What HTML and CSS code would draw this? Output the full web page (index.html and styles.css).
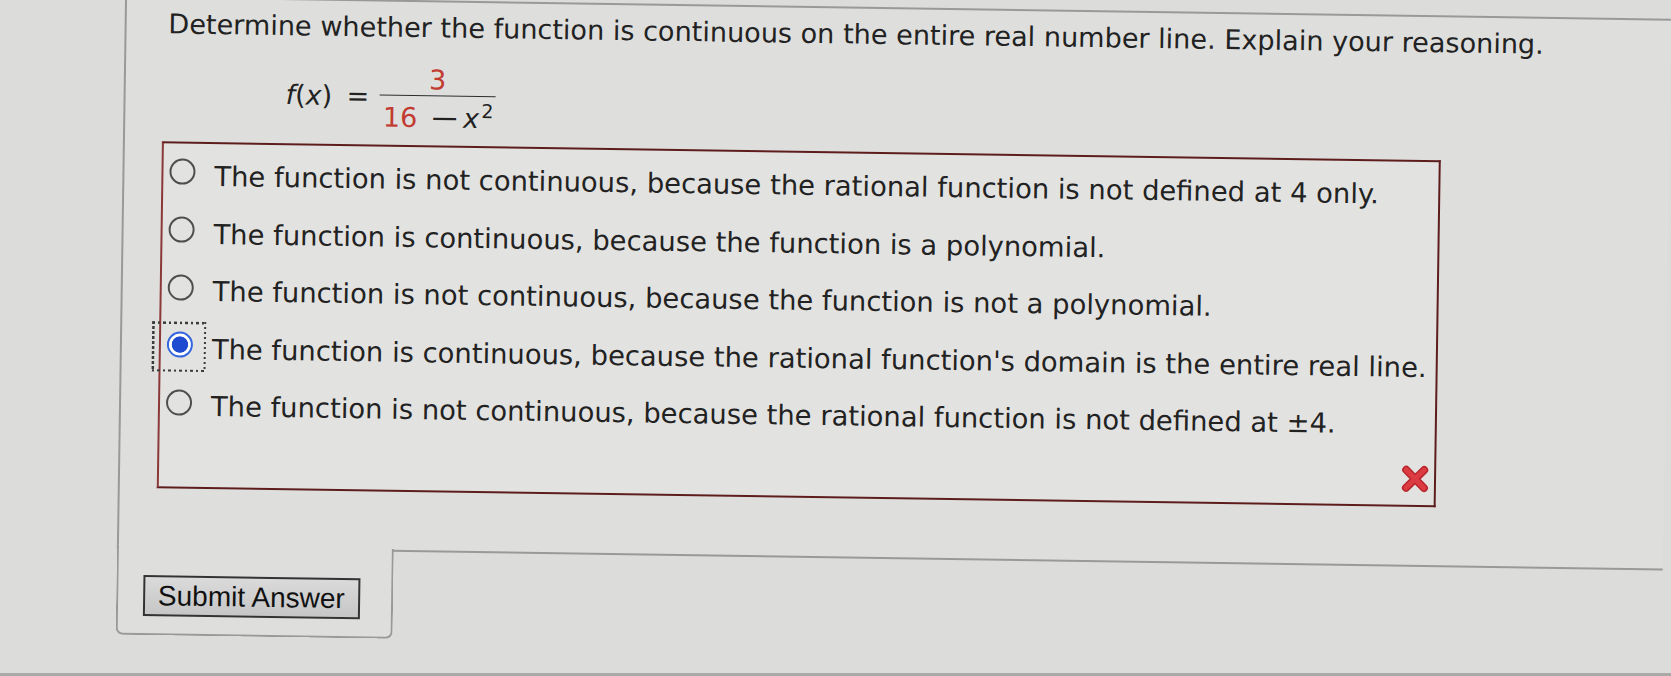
FILE: index.html
```html
<!DOCTYPE html>
<html lang="en">
<head>
    <meta charset="UTF-8">
    <meta name="viewport" content="width=device-width, initial-scale=1.0">
    <title>Question</title>
    <link rel="stylesheet" href="styles.css">
</head>
<body>
    <div class="page">
        <div class="panel">
            <p class="prompt">Determine whether the function is continuous on the entire real number line. Explain your reasoning.</p>

            <div class="formula">
                <span class="lhs"><i>f</i>(<i>x</i>)<span class="eq">=</span></span>
                <span class="frac">
                    <span class="num"><span class="val">3</span></span>
                    <span class="den"><span class="val">16</span><span class="minus">&minus;</span><i>x</i><sup>2</sup></span>
                </span>
            </div>

            <div class="answer-box">
                <ul class="choices">
                    <li class="choice"><span class="radio"></span><span class="label">The function is not continuous, because the rational function is not defined at 4 only.</span></li>
                    <li class="choice"><span class="radio"></span><span class="label">The function is continuous, because the function is a polynomial.</span></li>
                    <li class="choice"><span class="radio"></span><span class="label">The function is not continuous, because the function is not a polynomial.</span></li>
                    <li class="choice"><span class="radio checked focused"></span><span class="label">The function is continuous, because the rational function's domain is the entire real line.</span></li>
                    <li class="choice"><span class="radio"></span><span class="label">The function is not continuous, because the rational function is not defined at &plusmn;4.</span></li>
                </ul>
                <div class="mark">
                    <svg width="28" height="28" viewBox="0 0 28 28">
                        <path d="M5 5L23 23M23 5L5 23" stroke="#b8262d" stroke-width="8" stroke-linecap="round"/>
                        <path d="M5 5L23 23M23 5L5 23" stroke="#dd3b42" stroke-width="5" stroke-linecap="round"/>
                    </svg>
                </div>
            </div>
        </div>
        <div class="submit-tab">
            <button type="button" class="submit">Submit Answer</button>
        </div>
    </div>
</body>
</html>
```

FILE: styles.css
```css
html, body {
    margin: 0;
    width: 1671px;
    height: 676px;
    overflow: hidden;
}
body {
    font-family: "DejaVu Sans", Verdana, sans-serif;
    color: #222;
    background: linear-gradient(to top, #a9aaa8 0, #a9aaa8 3px, #dcdddb 3px);
}
/* the photo is slightly tilted, so the whole sheet is turned a little */
.page {
    display: flow-root;
    width: 1650px;
    margin-left: 10px;
    transform: rotate(0.85deg);
    transform-origin: 0 0;
}
.panel {
    margin: -6px 0 0 115px;
    width: 1507.3px;
    border: 2px solid #999;
    border-right: none;
    background: #dedfdd;
    padding: 10px 0 58.5px 36.7px;
}
.prompt {
    margin: 0 0 0 5.1px;
    font-size: 27.1px;
    line-height: 32px;
    white-space: nowrap;
}
.formula {
    display: flex;
    align-items: flex-start;
    margin: 19.65px 0 0 123.3px;
    font-size: 27px;
    line-height: 32px;
}
.lhs {
    margin-top: 17.5px;
    white-space: nowrap;
}
.eq {
    margin: 0 9.8px 0 14.5px;
}
.frac {
    display: flex;
    flex-direction: column;
    align-items: center;
}
.num {
    line-height: 31px;
}
.val {
    color: #c23a30;
}
.den {
    margin-top: 0.1px;
    border-top: 1.5px solid #2e2e2e;
    padding: 6.4px 2.3px 0 4.2px;
    white-space: nowrap;
}
.minus {
    display: inline-block;
    margin: 0 7px 0 16.3px;
    transform: scaleX(1.35);
}
.den sup {
    font-size: 19px;
    line-height: 0;
    vertical-align: 10px;
    margin-left: 2px;
}
.answer-box {
    margin-top: 11.35px;
    width: 1263.6px;
    border: 2px solid #5e1d1d;
    border-left-color: #8a3838;
    background: #e2e3e1;
    padding: 3.35px 5.4px 12.4px 6.8px;
}
.choices {
    list-style: none;
    margin: 0;
    padding: 0;
}
.choice {
    display: flex;
    align-items: center;
    height: 57.6px;
    font-size: 27.4px;
    white-space: nowrap;
}
.radio {
    position: relative;
    flex: none;
    width: 26px;
    height: 26px;
    box-sizing: border-box;
    border: 2px solid #4e4e4e;
    border-radius: 50%;
    margin: 0 18.5px 8.3px 0;
}
.radio.checked {
    border: 2.5px solid #3466dd;
    background: radial-gradient(circle closest-side, #1f4bd0 71%, #fff 77%);
}
.radio.focused::after {
    content: "";
    position: absolute;
    top: -12px;
    bottom: -16px;
    left: -17.2px;
    right: -15px;
    background:
        repeating-linear-gradient(to right, #3b3b3b 0 2.5px, transparent 2.5px 5.5px) top / 100% 2.5px no-repeat,
        repeating-linear-gradient(to right, #3b3b3b 0 2.5px, transparent 2.5px 5.5px) bottom / 100% 2.5px no-repeat,
        repeating-linear-gradient(to bottom, #3b3b3b 0 2.5px, transparent 2.5px 5px) left / 2.5px 100% no-repeat,
        repeating-linear-gradient(to bottom, #3b3b3b 0 2.5px, transparent 2.5px 5px) right / 2.5px 100% no-repeat;
}
.mark {
    display: flex;
    justify-content: flex-end;
    margin-top: 10.75px;
}
.mark svg {
    display: block;
}
.submit-tab {
    margin: -3px 0 0 115px;
    width: 248.2px;
    border: 2px solid #999;
    border-top: none;
    border-radius: 0 0 7px 7px;
    background: #dedfdd;
    padding: 29.3px 0 17px 24.8px;
}
.submit {
    display: block;
    height: 41px;
    box-sizing: border-box;
    padding: 0 13px;
    border: 2px solid #333;
    border-radius: 0;
    background: linear-gradient(#dadada, #c6c6c6);
    font: 28px/37px "Liberation Sans", Arial, sans-serif;
    color: #111;
    white-space: nowrap;
}
```
